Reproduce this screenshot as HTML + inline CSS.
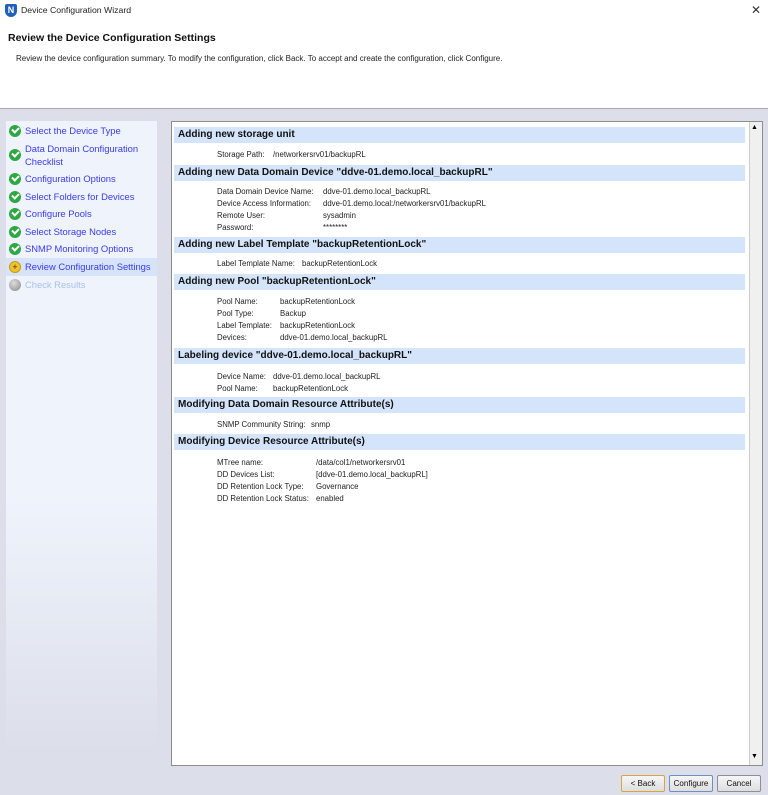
<!DOCTYPE html><html><head><style>
*{margin:0;padding:0;box-sizing:border-box}
body{width:768px;height:795px;position:relative;background:#dcdfe9;font-family:"Liberation Sans",Arial,sans-serif;overflow:hidden}
.a{position:absolute;white-space:nowrap}
.hd{position:absolute;left:174px;width:571px;height:16px;background:#d4e4fa;font-weight:bold;font-size:10px;line-height:16px;padding-left:4px;color:#111}
.r{position:absolute;font-size:7.8px;color:#222;white-space:nowrap}
.nav{position:absolute;left:25px;font-size:9.4px;line-height:12px;color:#3b3bea;white-space:nowrap}
.ck{position:absolute;left:9px;width:12px;height:12px;border-radius:50%;background:#2ea843}
.ck:after{content:"";position:absolute;left:3px;top:2px;width:5px;height:3px;border-left:2px solid #fff;border-bottom:2px solid #fff;transform:rotate(-45deg)}
.btn{position:absolute;top:775px;height:17px;width:44px;border:1px solid #8a8f9a;border-radius:2px;background:linear-gradient(#f6f6f6,#dedede);font-size:8px;text-align:center;line-height:15px;color:#111}
</style></head><body>
<div class="a" style="left:0;top:0;width:768px;height:109px;background:#fff;border-bottom:1px solid #a8a8a8"></div>
<div class="a" style="left:5px;top:4px;width:12px;height:13px;background:#1f5fb8;border-radius:2px 2px 6px 6px;color:#fff;font-size:9px;font-weight:bold;text-align:center;line-height:13px">N</div>
<div class="a" style="left:21px;top:5px;font-size:8.7px;color:#222">Device Configuration Wizard</div>
<div class="a" style="left:751px;top:3px;font-size:12px;color:#333">✕</div>
<div class="a" style="left:8px;top:32px;font-size:10.5px;font-weight:bold;color:#111">Review the Device Configuration Settings</div>
<div class="a" style="left:16px;top:54px;font-size:8px;color:#222">Review the device configuration summary. To modify the configuration, click Back. To accept and create the configuration, click Configure.</div>

<div class="a" style="left:6px;top:121px;width:151px;height:630px;background:linear-gradient(#eef3fc 60%,#dcdfe9)"></div>
<div class="a" style="left:6px;top:258px;width:151px;height:18px;background:#d6e3f8"></div>
<div class="ck" style="top:125px"></div><div class="nav" style="top:125px">Select the Device Type</div>
<div class="ck" style="top:149px"></div><div class="nav" style="top:143px;line-height:12.5px">Data Domain Configuration<br>Checklist</div>
<div class="ck" style="top:173px"></div><div class="nav" style="top:173px">Configuration Options</div>
<div class="ck" style="top:191px"></div><div class="nav" style="top:191px">Select Folders for Devices</div>
<div class="ck" style="top:208px"></div><div class="nav" style="top:208px">Configure Pools</div>
<div class="ck" style="top:226px"></div><div class="nav" style="top:226px">Select Storage Nodes</div>
<div class="ck" style="top:243px"></div><div class="nav" style="top:243px">SNMP Monitoring Options</div>
<div class="a" style="left:9px;top:261px;width:12px;height:12px;border-radius:50%;background:#f3c12c;border:1px solid #c79a10;font-size:9px;line-height:10px;text-align:center;color:#333">+</div><div class="nav" style="top:261px">Review Configuration Settings</div>
<div class="a" style="left:9px;top:279px;width:12px;height:12px;border-radius:50%;background:radial-gradient(circle at 40% 35%,#ddd,#888)"></div><div class="nav" style="top:279px;color:#a9c1e8">Check Results</div>

<div class="a" style="left:171px;top:121px;width:592px;height:645px;background:#fff;border:1px solid #8d8d8d"></div>
<div class="a" style="left:749px;top:122px;width:13px;height:643px;background:#f0f0f0;border-left:1px solid #ccc"></div>
<div class="a" style="left:751px;top:124px;font-size:7px">▲</div>
<div class="a" style="left:751px;top:753px;font-size:7px">▼</div>

<div class="hd" style="top:127px">Adding new storage unit</div>
<div class="r" style="left:217px;top:150px">Storage Path:</div><div class="r" style="left:273px;top:150px">/networkersrv01/backupRL</div>
<div class="hd" style="top:165px">Adding new Data Domain Device "ddve-01.demo.local_backupRL"</div>
<div class="r" style="left:217px;top:186px;line-height:12px">Data Domain Device Name:<br>Device Access Information:<br>Remote User:<br>Password:</div>
<div class="r" style="left:323px;top:186px;line-height:12px">ddve-01.demo.local_backupRL<br>ddve-01.demo.local:/networkersrv01/backupRL<br>sysadmin<br>********</div>
<div class="hd" style="top:237px">Adding new Label Template "backupRetentionLock"</div>
<div class="r" style="left:217px;top:259px">Label Template Name:</div><div class="r" style="left:302px;top:259px">backupRetentionLock</div>
<div class="hd" style="top:274px">Adding new Pool "backupRetentionLock"</div>
<div class="r" style="left:217px;top:296px;line-height:12px">Pool Name:<br>Pool Type:<br>Label Template:<br>Devices:</div>
<div class="r" style="left:280px;top:296px;line-height:12px">backupRetentionLock<br>Backup<br>backupRetentionLock<br>ddve-01.demo.local_backupRL</div>
<div class="hd" style="top:348px">Labeling device "ddve-01.demo.local_backupRL"</div>
<div class="r" style="left:217px;top:371px;line-height:12px">Device Name:<br>Pool Name:</div>
<div class="r" style="left:273px;top:371px;line-height:12px">ddve-01.demo.local_backupRL<br>backupRetentionLock</div>
<div class="hd" style="top:397px">Modifying Data Domain Resource Attribute(s)</div>
<div class="r" style="left:217px;top:420px">SNMP Community String:</div><div class="r" style="left:311px;top:420px">snmp</div>
<div class="hd" style="top:434px">Modifying Device Resource Attribute(s)</div>
<div class="r" style="left:217px;top:457px;line-height:12px">MTree name:<br>DD Devices List:<br>DD Retention Lock Type:<br>DD Retention Lock Status:</div>
<div class="r" style="left:316px;top:457px;line-height:12px">/data/col1/networkersrv01<br>[ddve-01.demo.local_backupRL]<br>Governance<br>enabled</div>

<div class="btn" style="left:621px;border-color:#d9a53c">&lt; Back</div>
<div class="btn" style="left:669px;border-color:#6f8fbf">Configure</div>
<div class="btn" style="left:717px">Cancel</div>
</body></html>
